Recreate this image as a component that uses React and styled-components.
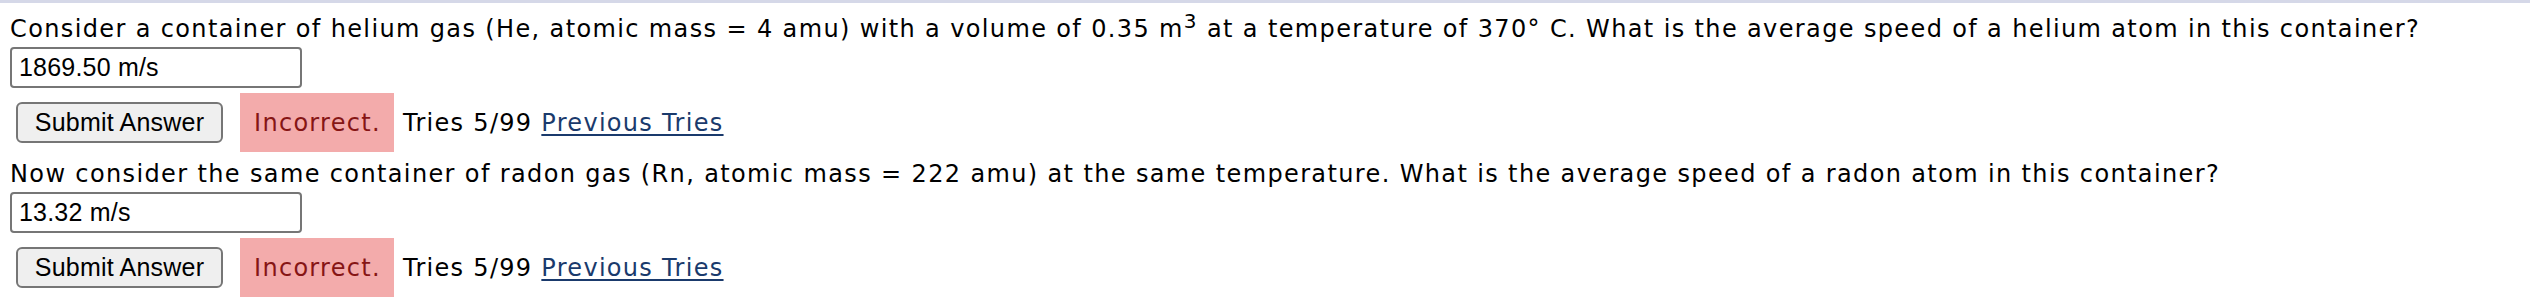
import React from "react";
import styled, { createGlobalStyle } from "styled-components";

const GlobalStyle = createGlobalStyle`
  html, body {
    margin: 0;
    padding: 0;
    background: #fff;
  }
  body {
    font-family: "DejaVu Sans", Verdana, sans-serif;
  }
`;

const Page = styled.div`
  border-top: 3px solid #d5d8e8;
  padding: 12px 10px 0 10px;
`;

const Part = styled.div`
  display: flex;
  flex-direction: column;
  align-items: flex-start;
  margin-bottom: 8px;
`;

const Question = styled.div`
  font-family: "DejaVu Sans", Verdana, sans-serif;
  font-size: 24px;
  line-height: 28px;
  letter-spacing: 1.37px;
  color: #000;
  white-space: nowrap;

  sup {
    font-size: 20px;
    line-height: 0;
  }
`;

const AnswerInput = styled.input`
  box-sizing: border-box;
  margin-top: 4px;
  width: 292px;
  height: 41px;
  padding: 1px 7px;
  border: 2px solid #767676;
  border-radius: 4px;
  font-family: "Liberation Sans", Arial, sans-serif;
  font-size: 25px;
  letter-spacing: 0.2px;
  color: #000;
  background: #fff;
`;

const ActionRow = styled.div`
  display: flex;
  align-items: center;
  margin-top: 5px;
  font-family: "DejaVu Sans", Verdana, sans-serif;
  font-size: 24px;
  letter-spacing: 1.3px;
  color: #000;
`;

const SubmitButton = styled.button`
  box-sizing: border-box;
  margin-left: 6px;
  width: 207px;
  height: 41px;
  padding: 0;
  border: 2px solid #767676;
  border-radius: 6px;
  background: #efefef;
  font-family: "Liberation Sans", Arial, sans-serif;
  font-size: 25px;
  letter-spacing: 0.2px;
  color: #000;
`;

const Verdict = styled.span`
  box-sizing: border-box;
  display: flex;
  align-items: center;
  height: 59px;
  margin-left: 17px;
  padding: 0 13px 0 14px;
  background: #f3abab;
  color: #861515;
`;

const Tries = styled.span`
  margin-left: 9px;
  white-space: pre;
`;

const TriesLink = styled.a`
  color: #1a3a6c;
  text-decoration: underline;
  text-underline-offset: 3px;
`;

function Problem({ question, value }) {
  return (
    <Part>
      <Question>{question}</Question>
      <AnswerInput defaultValue={value} />
      <ActionRow>
        <SubmitButton type="button">Submit Answer</SubmitButton>
        <Verdict>Incorrect.</Verdict>
        <Tries>
          {"Tries 5/99 "}
          <TriesLink href="#">Previous Tries</TriesLink>
        </Tries>
      </ActionRow>
    </Part>
  );
}

export default function App() {
  return (
    <>
      <GlobalStyle />
      <Page>
        <Problem
          question={
            <>
              Consider a container of helium gas (He, atomic mass = 4 amu) with a volume of 0.35 m<sup>3</sup> at a
              temperature of 370° C. What is the average speed of a helium atom in this container?
            </>
          }
          value="1869.50 m/s"
        />
        <Problem
          question="Now consider the same container of radon gas (Rn, atomic mass = 222 amu) at the same temperature. What is the average speed of a radon atom in this container?"
          value="13.32 m/s"
        />
      </Page>
    </>
  );
}
